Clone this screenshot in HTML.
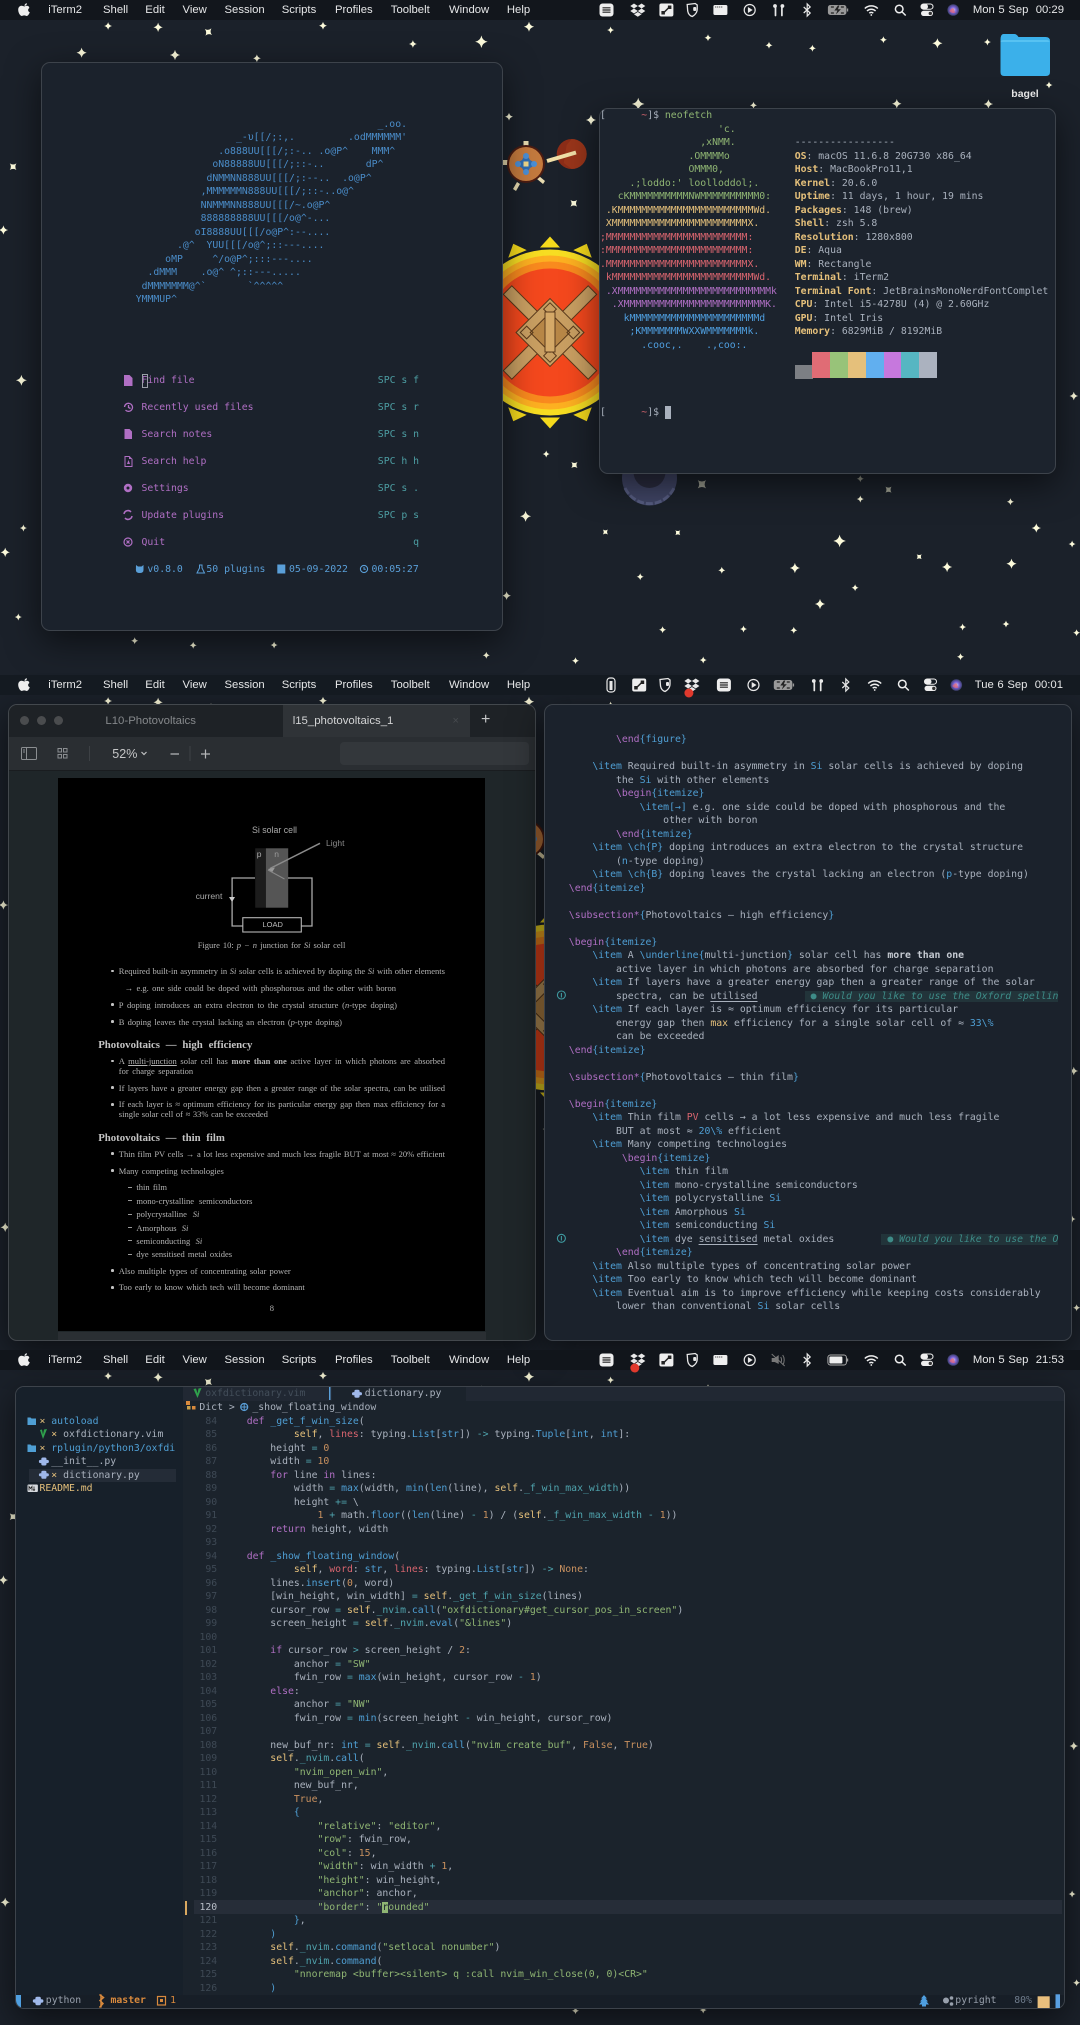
<!DOCTYPE html>
<html><head><meta charset="utf-8"><title>Desktop</title>
<style>
*{box-sizing:border-box}
html,body{margin:0;padding:0;background:#1b212a;width:1080px;height:2025px;overflow:hidden}
#root{position:relative;width:1080px;height:2025px;overflow:hidden;background:#1b212a}
svg.abs{position:absolute;left:0;top:0}
.win{position:absolute;border:1px solid #3d434b;border-radius:9px;background:#1b222c;box-shadow:0 10px 34px rgba(0,0,0,.55)}
.t{position:absolute;margin:0;font:9.8px/13.5px "DejaVu Sans Mono","Liberation Mono",monospace;white-space:pre;color:#a9b1bd}
.bar{position:absolute;left:0;width:1080px;height:20px;background:#12161c}
.m{position:absolute;font:11.3px/20px "Liberation Sans",sans-serif;color:#e6e7e8;white-space:nowrap}
.l{position:absolute;font:8.5px/12px "Liberation Serif",serif;color:#b4b4b4;text-align:justify;text-align-last:justify}
.h{position:absolute;font:bold 10.8px/12px "Liberation Serif",serif;color:#c4c4c4;text-align:justify;text-align-last:justify}
.d{position:absolute;font:8px/12px "Liberation Sans",sans-serif;color:#aaa;white-space:nowrap}
.bl{position:absolute;width:2.6px;height:2.6px;border-radius:50%;background:#c4c4c4;left:111.4px}
.ds{position:absolute;width:4px;height:1px;background:#999;left:128.1px}
.s{position:absolute}
/* syntax */
.a{color:#4f9fd4}.p{color:#b06fc4}.y{color:#e5c07b}.r{color:#d9656f}.g{color:#8fb573}.o{color:#c9915f}.c{color:#4fa3ad}
.n{color:#3e4955}.w{color:#c5cad2}.k{color:#b06fc4}
.v{background:#22343a;color:#3e8c88;font-style:italic}
.u{text-decoration:underline;text-underline-offset:2px}
b{font-weight:bold}
</style></head><body><div id="root">

<svg class="abs" width="1080" height="2025" viewBox="0 0 1080 2025">
<defs>
<path id="s" d="M0-.78Q.13-.13 .78 0Q.13.13 0 .78Q-.13.13-.78 0Q-.13-.13 0-.78Z" fill="#fdfbdc"/>
<polygon id="sp" points="-10,-85 10,-85 0,-96" fill="#f5da1c"/>
<g id="wall">
<g>
<circle cx="550" cy="332.5" r="83" fill="#f7dd22"/>
<use href="#sp" transform="translate(550 332.5)"/><use href="#sp" transform="translate(550 332.5) rotate(22.5)"/><use href="#sp" transform="translate(550 332.5) rotate(45)"/><use href="#sp" transform="translate(550 332.5) rotate(67.5)"/><use href="#sp" transform="translate(550 332.5) rotate(90)"/><use href="#sp" transform="translate(550 332.5) rotate(112.5)"/><use href="#sp" transform="translate(550 332.5) rotate(135)"/><use href="#sp" transform="translate(550 332.5) rotate(157.5)"/><use href="#sp" transform="translate(550 332.5) rotate(180)"/><use href="#sp" transform="translate(550 332.5) rotate(202.5)"/><use href="#sp" transform="translate(550 332.5) rotate(225)"/><use href="#sp" transform="translate(550 332.5) rotate(247.5)"/><use href="#sp" transform="translate(550 332.5) rotate(270)"/><use href="#sp" transform="translate(550 332.5) rotate(292.5)"/><use href="#sp" transform="translate(550 332.5) rotate(315)"/><use href="#sp" transform="translate(550 332.5) rotate(337.5)"/>
<circle cx="550" cy="332.5" r="77" fill="#fdb021"/>
<circle cx="550" cy="332.5" r="71" fill="#f98a1e"/>
<circle cx="550" cy="332.5" r="64" fill="#f4481d"/>
<g transform="translate(550 332.5) rotate(45)" fill="#c99f62" stroke="#5a3a1c" stroke-width="1">
<rect x="-6" y="-60" width="12" height="120"/>
<rect x="-60" y="-6" width="120" height="12"/>
<rect x="-24" y="-24" width="48" height="48"/>
<rect x="-14" y="-14" width="28" height="28" fill="#b88747"/>
<rect x="-21" y="-21" width="9" height="9" fill="none"/>
<rect x="12" y="12" width="9" height="9" fill="none"/>
<rect x="12" y="-21" width="9" height="9" fill="none"/>
<rect x="-21" y="12" width="9" height="9" fill="none"/>
</g>
<rect x="545" y="312" width="10" height="40" fill="#d5a968" stroke="#5a3a1c"/>
</g>
<g>
<rect x="523.5" y="141" width="5" height="6" fill="#e8dcb0"/>
<rect x="503" y="160" width="6" height="5" fill="#e8dcb0"/>
<path d="M513 189l4-7 3 2-4 7z" fill="#e8dcb0"/><path d="M539 176l6 5-2 3-6-5z" fill="#e8dcb0"/>
<circle cx="526" cy="164" r="19" fill="#4a1c12"/><circle cx="526" cy="164" r="17" fill="#c47a3e"/>
<path d="M526 153l4 7 7 4-7 4-4 7-4-7-7-4 7-4z" fill="#2f6db3"/><circle cx="526" cy="156" r="3" fill="#4b8fd6"/><circle cx="526" cy="172" r="3" fill="#4b8fd6"/><circle cx="518" cy="164" r="3" fill="#4b8fd6"/><circle cx="534" cy="164" r="3" fill="#4b8fd6"/>
<rect x="523.5" y="161.5" width="5" height="5" fill="#f1d98a"/>
<circle cx="571.7" cy="154" r="15" fill="#8c2d18"/><path d="M571.7 139a15 15 0 0 1 0 30l-8-6 3-18z" fill="#a23a1d" opacity=".6"/>
<path d="M547 161l29-8.5" stroke="#f0dfa8" stroke-width="4"/>
</g>
<g><circle cx="649.5" cy="478" r="27.5" fill="#3f4464"/><circle cx="649.5" cy="472" r="16" fill="#2a2c3f"/><path d="M625 488a27 27 0 0 0 49 0" fill="none" stroke="#565c80" stroke-width="3" stroke-dasharray="7 2"/></g>
<g>
<use href="#s" transform="translate(108.1 26) scale(5)"/><use href="#s" transform="translate(158.1 27.3) scale(6)"/><use href="#s" transform="translate(208.4 32) rotate(40) scale(6)"/><use href="#s" transform="translate(323 25.7) scale(5)"/><use href="#s" transform="translate(529 26.7) scale(6.5)"/><use href="#s" transform="translate(81.6 52.7) scale(6.5)"/><use href="#s" transform="translate(175 55) scale(6.5)"/><use href="#s" transform="translate(256.9 58.3) scale(5)"/><use href="#s" transform="translate(412.9 44) scale(5)"/><use href="#s" transform="translate(481.4 41.7) scale(8)"/><use href="#s" transform="translate(509 116.7) scale(5)"/><use href="#s" transform="translate(13.1 166.7) rotate(45) scale(6)"/><use href="#s" transform="translate(3.4 230) scale(6)"/>
<use href="#s" transform="translate(610.6 30) scale(4.5)"/><use href="#s" transform="translate(708 37.7) scale(4.5)"/><use href="#s" transform="translate(769 45.3) scale(4.5)"/><use href="#s" transform="translate(812.4 48.3) scale(4.5)"/><use href="#s" transform="translate(883.4 39.7) scale(4.5)"/><use href="#s" transform="translate(937.4 43.3) scale(6.5)"/><use href="#s" transform="translate(987.4 42) scale(4.5)"/><use href="#s" transform="translate(1049 85) scale(4.5)"/><use href="#s" transform="translate(638.2 104) scale(8)"/><use href="#s" transform="translate(753.5 105.3) scale(4.5)"/><use href="#s" transform="translate(896.8 103.7) scale(6)"/><use href="#s" transform="translate(988.4 104) scale(6)"/><use href="#s" transform="translate(591 120) scale(6.5)"/><use href="#s" transform="translate(573.8 203.3) rotate(45) scale(6)"/>
<use href="#s" transform="translate(21.4 380.3) scale(7)"/><use href="#s" transform="translate(23.4 528) scale(4.5)"/><use href="#s" transform="translate(5.2 552.3) scale(6)"/><use href="#s" transform="translate(18.3 617) scale(4.5)"/><use href="#s" transform="translate(134.7 640.7) scale(4.5)"/><use href="#s" transform="translate(193.2 645.3) scale(4.5)"/><use href="#s" transform="translate(274.1 645) scale(4.5)"/><use href="#s" transform="translate(486.3 655.3) scale(4.5)"/><use href="#s" transform="translate(525.6 516.3) scale(7)"/><use href="#s" transform="translate(506.6 595.7) scale(5.5)"/>
<use href="#s" transform="translate(1073.8 396) scale(5.5)"/><use href="#s" transform="translate(546.2 454) scale(4.5)"/><use href="#s" transform="translate(574.4 465) rotate(45) scale(5.5)"/><use href="#s" transform="translate(701.9 484.3) rotate(45) scale(7.5)" opacity=".55"/><use href="#s" transform="translate(860.3 478.7) scale(4.5)" opacity=".5"/><use href="#s" transform="translate(888.5 489.7) rotate(45) scale(5.5)" opacity=".6"/><use href="#s" transform="translate(860.3 499) scale(4.5)"/><use href="#s" transform="translate(1010.4 501.7) scale(4.5)"/><use href="#s" transform="translate(1036.3 528) scale(6)"/><use href="#s" transform="translate(1072.1 544) scale(4.5)"/><use href="#s" transform="translate(839.6 541) scale(8)"/><use href="#s" transform="translate(605.4 532) rotate(45) scale(4.5)"/><use href="#s" transform="translate(677.8 532.7) rotate(45) scale(4.5)"/><use href="#s" transform="translate(919.2 556.7) rotate(45) scale(4.5)"/><use href="#s" transform="translate(947.1 567) scale(6.5)"/><use href="#s" transform="translate(1011.5 563.7) scale(6.5)"/><use href="#s" transform="translate(794.9 568) scale(6.5)"/><use href="#s" transform="translate(721.8 570.3) scale(4.5)"/><use href="#s" transform="translate(640.2 576.7) scale(4.5)"/><use href="#s" transform="translate(855.1 587.7) scale(4.5)"/><use href="#s" transform="translate(820 604) scale(6.5)"/><use href="#s" transform="translate(662.6 629.7) scale(4.5)"/><use href="#s" transform="translate(743.5 629) scale(4.5)"/><use href="#s" transform="translate(793.8 630.3) scale(4.5)"/><use href="#s" transform="translate(962.6 627) scale(4.5)"/><use href="#s" transform="translate(1006 624) scale(4.5)"/><use href="#s" transform="translate(1076.6 632.7) scale(4.5)"/><use href="#s" transform="translate(575.5 660.7) scale(4.5)"/><use href="#s" transform="translate(703.2 660) scale(4.5)"/><use href="#s" transform="translate(960.5 656.7) scale(4.5)"/>
</g>
</g>
<!-- menu bar icons -->
<path id="i-apple" fill="#eee" d="M2.9-6.8c.2 1.2-1 2.7-2.4 2.6C.3-5.4 1.6-6.7 2.9-6.8zM5.2-1.9C3.5-.9 3.9 1.6 5.8 2.3 5.2 3.9 4 6 2.7 6 1.8 6 1.3 5.4.2 5.4-.9 5.4-1.5 6-2.3 6-3.8 6-5.8 2.7-5.8-.2-5.8-2.9-4-4.2-2.4-4.2c1 0 1.9.6 2.5.6.6 0 1.6-.7 2.8-.7.9 0 1.8.5 2.3 1.4z"/>
<g id="i-menu"><rect x="-7" y="-6.5" width="14" height="13" rx="3" fill="#eee"/><path d="M-4-2.2h8M-4 0h8M-4 2.2h8" stroke="#222" stroke-width="1.2"/></g>
<g id="i-drop" fill="#e8e8e8"><path d="M-3.8-6.5L0-4-3.8-1.5-7.5-4zM3.8-6.5L7.5-4 3.8-1.5 0-4zM-3.8-1.5L0 1-3.8 3.5-7.5 1zM3.8-1.5L7.5 1 3.8 3.5 0 1zM-3.8 4.3L0 2 3.8 4.3 0 6.8z"/></g>
<g id="i-rect"><rect x="-7" y="-6.5" width="14" height="13" rx="2" fill="#eee"/><path d="M-4 4L4-4" stroke="#222" stroke-width="1.5"/><rect x="-5" y="1" width="3.5" height="3.5" fill="#222"/><rect x="1.5" y="-4.5" width="3.5" height="3.5" fill="#222"/></g>
<g id="i-shield" fill="none" stroke="#e8e8e8" stroke-width="1.3"><path d="M-5-5.5L3-6.5 5-5V-1C5 3 2 5.5 0 6.5-2 6-4 4-4.5 1z"/><rect x="1" y="-3" width="3" height="4" rx="1" fill="#e8e8e8" stroke="none"/></g>
<g id="i-win"><rect x="-7" y="-5" width="14" height="10" rx="1.5" fill="#eee"/><path d="M-5-3h.8M-3-3h.8M-1-3h.8M1-3h.8" stroke="#222" stroke-width="1.2"/></g>
<g id="i-play"><circle r="5.5" fill="none" stroke="#e8e8e8" stroke-width="1.2"/><path d="M-1.8-3L3 0-1.8 3z" fill="#e8e8e8"/></g>
<g id="i-pods" stroke="#e8e8e8" stroke-linecap="round" fill="none"><path d="M-3.2-3v8.5M3.2-3v8.5" stroke-width="1.7"/><circle cx="-3.7" cy="-4" r="1.9" fill="#e8e8e8" stroke="none"/><circle cx="3.7" cy="-4" r="1.9" fill="#e8e8e8" stroke="none"/></g>
<path id="i-bt" d="M-3.5-3L3 3 0 6V-6L3-3-3.5 3" fill="none" stroke="#e8e8e8" stroke-width="1.2"/>
<g id="i-batc"><rect x="-10" y="-5" width="18.5" height="10" rx="2.5" fill="#999"/><rect x="9" y="-1.5" width="1.3" height="3" fill="#999"/><path d="M0-4.5L-3.5.5H-.5L-2 4.5 3-.8H0L1.5-4.5z" fill="#222"/><path d="M-7-3h3M-7 3h3M3 -3h3M3 3h3" stroke="#222" stroke-width="1.2"/></g>
<g id="i-bat"><rect x="-10" y="-5" width="18.5" height="10" rx="2.5" fill="none" stroke="#aaa"/><rect x="-8.5" y="-3.5" width="13" height="7" rx="1" fill="#eee"/><rect x="9" y="-1.5" width="1.3" height="3" fill="#999"/></g>
<g id="i-wifi" fill="none" stroke="#eee" stroke-width="1.5"><path d="M-6.5-1.5a9.500 9.500 0 0 1 13 0M-4.300 1a6.300 6.300 0 0 1 8.600 0M-2 3.200a3 3 0 0 1 4 0"/><circle cy="5" r=".9" fill="#eee" stroke="none"/></g>
<g id="i-sr" fill="none" stroke="#eee" stroke-width="1.5"><circle cx="-1" cy="-1" r="3.8"/><path d="M2 2L5.5 5.5"/></g>
<g id="i-ctl"><rect x="-6" y="-6" width="12" height="5.2" rx="2.6" fill="none" stroke="#eee"/><rect x="-6" y="-6" width="7" height="5.2" rx="2.6" fill="#eee"/><rect x="-6" y=".8" width="12" height="5.2" rx="2.6" fill="#eee"/><circle cx="3.3" cy="3.4" r="1.7" fill="#333"/></g>
<radialGradient id="sg"><stop offset="0" stop-color="#dde"/><stop offset=".5" stop-color="#7a62d8"/><stop offset="1" stop-color="#3a3f6a"/></radialGradient>
<g id="i-siri"><circle r="5.8" fill="url(#sg)"/><path d="M-4 1Q0-4 1 0T4 1Q0 5-4 1z" fill="#e0637a" opacity=".75"/></g>
<g id="i-mute"><path d="M-7-2h3l4-3v9L-4 2h-3z" fill="#777"/><path d="M2-3a6 6 0 0 1 0 6M4-5a9 9 0 0 1 0 10M-7-6L6 6" stroke="#777" fill="none"/></g>
<g id="i-bd"><circle cx="-3" cy="4" r="4.5" fill="#e0392d"/></g>
<path id="i-py" fill="#9fb8ea" d="M-1-5h2.500a2 2 0 0 1 2 2v1h1a2 2 0 0 1 0 4h-1v1a2 2 0 0 1-2 2H-1a2 2 0 0 1-2-2V2h-1a2 2 0 0 1 0-4h1v-1a2 2 0 0 1 2-2z"/>
<path id="i-fold" fill="#4f9fd4" d="M-4-3.5h3l1 1h4.500v6.500h-8.500z"/>
</defs>
<use href="#wall"/>
<use href="#wall" y="675"/>
<use href="#wall" y="1350"/>
<!-- desktop folder -->
<path d="M1000.5 40q0-6 3-6h11q2 0 4 3h27q4.500 0 4.500 4v31q0 4-4 4h-42q-3.500 0-3.500-4z" fill="#3bb0ea"/>
<path d="M1000.5 42q0-2 3-2h43q3 0 3 2" fill="#57c2f2"/>
</svg>
<div class="m" style="left:1002px;top:84px;width:46px;text-align:center;font-weight:bold;font-size:10.5px;color:#eee">bagel</div>

<!-- WINDOW 1: dashboard -->
<div class="win" style="left:41px;top:62px;width:462px;height:569px;background:#1b222c"></div>
<pre class="t" style="left:135.7px;top:117.75px;color:#4a8cc8">                                         _.oo.
                 _-υ[[/;:,.         .odMMMMMM'
              .o888UU[[[/;:-.. .o@P^    MMM^
             oN88888UU[[[/;::-..       dP^
            dNMMNN888UU[[[/;:--..  .o@P^
           ,MMMMMMN888UU[[[/;::-..o@^
           NNMMMNN888UU[[[/~.o@P^
           888888888UU[[[/o@^-...
          oI8888UU[[[/o@P^:--....
       .@^  YUU[[[/o@^;::---....
     oMP     ^/o@P^;:::---....
  .dMMM    .o@^ ^;::---.....
 dMMMMMMM@^`       `^^^^^
YMMMUP^</pre>
<pre class="t" style="left:141.5px;top:374px;color:#b06fc4">Find file

Recently used files

Search notes

Search help

Settings

Update plugins

Quit</pre>
<pre class="t" style="left:377.8px;top:374px;color:#4d9ea3">SPC s f

SPC s r

SPC s n

SPC h h

SPC s .

SPC p s

      q</pre>
<pre class="t" style="left:141.5px;top:563px;color:#5a9fd8"> v0.8.0    50 plugins    05-09-2022    00:05:27</pre>
<div class="s" style="left:141.7px;top:373.5px;width:6.5px;height:14px;border:1px solid #9a9fa8"></div>
<svg class="abs" width="1080" height="675" viewBox="0 0 1080 675" style="pointer-events:none">
<g fill="#b06fc4">
<path d="M124 375h5.500l3 3v8h-8.500z"/>
<g fill="none" stroke="#b06fc4" stroke-width="1.3"><path d="M124.500 407a4 4 0 1 1 1 3"/><path d="M128.500 405v2.500l2 1"/></g>
<path d="M124.500 429h5l2.500 2.500v7.500h-7.500z"/>
<path d="M124.500 456h5l3 3v8h-8zm1 1v9h6v-7h-2.500v-2z" fill-rule="evenodd"/><path d="M128.500 460l1.500 4h-3z"/>
<circle cx="128" cy="488" r="4.2"/><circle cx="128" cy="488" r="1.5" fill="#1b222c"/>
<g fill="none" stroke="#b06fc4" stroke-width="1.5"><path d="M124 514a4 4 0 0 1 7-2M132 516a4 4 0 0 1-7 2"/></g>
<g fill="none" stroke="#b06fc4" stroke-width="1.2"><circle cx="128" cy="542" r="4"/><path d="M126.500 540.500l3 3M129.500 540.500l-3 3"/></g>
</g>
<g fill="#5a9fd8">
<path d="M136 565l2 1.500h3.500l2-1.500v5q0 3-3.800 3t-3.800-3z"/>
<path d="M197 573l2.500-5v-3h2.500v3l2.500 5z" fill="none" stroke="#5a9fd8"/>
<rect x="277.3" y="564.5" width="8" height="9"/>
<circle cx="364" cy="569" r="3.6" fill="none" stroke="#5a9fd8" stroke-width="1.1"/><path d="M364 567v2.200h1.800" stroke="#5a9fd8" fill="none"/>
</g>
</svg>

<!-- WINDOW 2: neofetch -->
<div class="win" style="left:599px;top:108px;width:457px;height:366px;background:#1c232d"></div>
<pre class="t" style="left:600px;top:109px"><span style="color:#a9b1bd">[</span>      <span class="r">~</span>]$ <span class="g">neofetch</span>
<span class="g">                    'c.
                 ,xNMM.
               .OMMMMo
               OMMM0,
     .;loddo:' loolloddol;.
   cKMMMMMMMMMMNWMMMMMMMMMM0:</span>
<span class="y"> .KMMMMMMMMMMMMMMMMMMMMMMMWd.
 XMMMMMMMMMMMMMMMMMMMMMMMX.</span>
<span class="r">;MMMMMMMMMMMMMMMMMMMMMMMM:
:MMMMMMMMMMMMMMMMMMMMMMMM:
.MMMMMMMMMMMMMMMMMMMMMMMMX.
 kMMMMMMMMMMMMMMMMMMMMMMMMWd.</span>
<span class="p"> .XMMMMMMMMMMMMMMMMMMMMMMMMMMk
  .XMMMMMMMMMMMMMMMMMMMMMMMMK.</span>
<span style="color:#4f9fe0">    kMMMMMMMMMMMMMMMMMMMMMMd
     ;KMMMMMMMWXXWMMMMMMMk.
       .cooc,.    .,coo:.</span>




[      <span class="r">~</span>]$</pre>
<pre class="t" style="left:794.7px;top:136px;color:#a9b1bd">-----------------
<b class="y">OS</b>: macOS 11.6.8 20G730 x86_64
<b class="y">Host</b>: MacBookPro11,1
<b class="y">Kernel</b>: 20.6.0
<b class="y">Uptime</b>: 11 days, 1 hour, 19 mins
<b class="y">Packages</b>: 148 (brew)
<b class="y">Shell</b>: zsh 5.8
<b class="y">Resolution</b>: 1280x800
<b class="y">DE</b>: Aqua
<b class="y">WM</b>: Rectangle
<b class="y">Terminal</b>: iTerm2
<b class="y">Terminal Font</b>: JetBrainsMonoNerdFontComplet
<b class="y">CPU</b>: Intel i5-4278U (4) @ 2.60GHz
<b class="y">GPU</b>: Intel Iris
<b class="y">Memory</b>: 6829MiB / 8192MiB</pre>
<div class="s" style="left:794.8px;top:365px;width:18px;height:13.5px;background:#7c7f84"></div>
<div class="s" style="left:812.4px;top:351.7px;width:17.8px;height:26.8px;background:#e06c75"></div>
<div class="s" style="left:830.2px;top:351.7px;width:17.8px;height:26.8px;background:#98c379"></div>
<div class="s" style="left:848px;top:351.7px;width:17.8px;height:26.8px;background:#e5c07b"></div>
<div class="s" style="left:865.8px;top:351.7px;width:17.8px;height:26.8px;background:#61afef"></div>
<div class="s" style="left:883.6px;top:351.7px;width:17.8px;height:26.8px;background:#c678dd"></div>
<div class="s" style="left:901.4px;top:351.7px;width:17.8px;height:26.8px;background:#56b6c2"></div>
<div class="s" style="left:919.2px;top:351.7px;width:17.8px;height:26.8px;background:#abb2bf"></div>
<div class="s" style="left:664.7px;top:405.7px;width:5.9px;height:13.5px;background:#a9b1bd"></div>

<!-- PREVIEW WINDOW -->
<div class="win" style="left:8px;top:704px;width:528px;height:637px;background:#1f2629;overflow:hidden;border-color:#43484d">
 <div class="s" style="left:0;top:0;width:528px;height:32px;background:#1e2226"></div>
 <div class="s" style="left:273.5px;top:0;width:187px;height:32px;background:#2f3337"></div>
 <div class="s" style="left:0;top:32px;width:528px;height:34px;background:#2a2e32;border-bottom:1px solid #1a1d20"></div>
 <div class="s" style="left:48.9px;top:627px;width:428px;height:9px;background:#2a2f33"></div>
</div>
<div class="s" style="left:19.6px;top:716.2px;width:9px;height:9px;border-radius:50%;background:#4a4c4e"></div>
<div class="s" style="left:36.8px;top:716.2px;width:9px;height:9px;border-radius:50%;background:#4a4c4e"></div>
<div class="s" style="left:53.7px;top:716.2px;width:9px;height:9px;border-radius:50%;background:#4a4c4e"></div>
<div class="m" style="left:105.4px;top:711px;font-size:11.4px;color:#85888b">L10-Photovoltaics</div>
<div class="m" style="left:292.7px;top:711px;font-size:11.4px;color:#d2d3d4">l15_photovoltaics_1</div>
<div class="m" style="left:452.5px;top:711px;font-size:11px;color:#474b4f">×</div>
<div class="m" style="left:481px;top:710px;font-size:16px;color:#c5c6c7">+</div>
<svg class="abs" width="1080" height="800" viewBox="0 0 1080 800" style="pointer-events:none">
<g fill="none" stroke="#8b8e91">
<rect x="21.5" y="747.5" width="15" height="12" rx="1"/><path d="M26.500 747.500v12M23 750h2M23 752h2"/>
<rect x="58" y="748.5" width="3.5" height="3.5"/><rect x="63.5" y="748.5" width="3.5" height="3.5"/><rect x="58" y="754.5" width="3.5" height="3.5"/><rect x="63.5" y="754.5" width="3.5" height="3.5"/>
<path d="M89.500 746v15M190 746v15" stroke="#3d4145"/>
<path d="M141.500 752l2.500 2.500 2.500-2.500" stroke-width="1.2" stroke="#c0c1c2"/>
<path d="M170.500 754h8.500M201 754h9M205.500 749.500v9" stroke="#b5b6b8" stroke-width="1.2"/>
</g>
</svg>
<div class="m" style="left:112.3px;top:743.5px;font-size:12.5px;color:#c5c6c7">52%</div>
<div class="s" style="left:340.2px;top:741.7px;width:188.4px;height:23.3px;border-radius:4px;background:#33373b"></div>
<div class="s" style="left:57.9px;top:778px;width:427px;height:553px;background:#000"></div>

<!-- PDF diagram -->
<svg class="abs" width="1080" height="1000" viewBox="0 0 1080 1000" style="pointer-events:none">
<rect x="255.2" y="848.3" width="10.7" height="59.4" fill="#1c1c1c"/>
<rect x="265.9" y="848.3" width="22.3" height="59.4" fill="#555"/>
<path d="M255 878H232.100V926H242.800M288 878H312V926H301.300" fill="none" stroke="#aaa" stroke-width="1.3"/>
<rect x="242.8" y="917.7" width="58.5" height="14.3" fill="none" stroke="#b5b5b5" stroke-width="1.1"/>
<path d="M320 843.300L270 868.500" stroke="#8b8b8b" stroke-width="1.5"/>
<path d="M268 869l7-1.500-3 5z" fill="#999"/>
<path d="M268 870l16.500 9" stroke="#888"/>
<path d="M232 902l-3-5h6z" fill="#ccc"/>
</svg>
<div class="d" style="left:252px;top:823.7px;font-size:8.8px">Si solar cell</div>
<div class="d" style="left:326px;top:837px;font-size:8.5px;color:#8a8a8a">Light</div>
<div class="d" style="left:256.8px;top:848px;font-size:8.5px">p</div>
<div class="d" style="left:274.3px;top:848px;font-size:8.5px;color:#999">n</div>
<div class="d" style="left:195.6px;top:890px;font-size:8.6px">current</div>
<div class="d" style="left:262.5px;top:919px;font-size:7.5px;color:#bbb">LOAD</div>
<div class="l" style="left:197.7px;top:939px;width:147.7px">Figure 10: <i>p − n</i> junction for <i>Si</i> solar cell</div>

<span class="bl" style="top:969.7px"></span><div class="l" style="left:118.8px;top:965px;width:326.2px">Required built-in asymmetry in <i>Si</i> solar cells is achieved by doping the <i>Si</i> with other elements</div>
<div class="l" style="left:124.7px;top:982px;width:271.3px">→ e.g. one side could be doped with phosphorous and the other with boron</div>
<span class="bl" style="top:1003.4px"></span><div class="l" style="left:118.8px;top:998.7px;width:278.2px">P doping introduces an extra electron to the crystal structure (<i>n</i>-type doping)</div>
<span class="bl" style="top:1020.4px"></span><div class="l" style="left:118.8px;top:1015.7px;width:223.2px">B doping leaves the crystal lacking an electron (<i>p</i>-type doping)</div>
<div class="h" style="left:98.2px;top:1038.7px;width:154.2px">Photovoltaics — high efficiency</div>
<span class="bl" style="top:1059.7px"></span><div class="l" style="left:118.8px;top:1055px;width:326.2px">A <u>multi-junction</u> solar cell has <b>more than one</b> active layer in which photons are absorbed</div>
<div class="l" style="left:118.8px;top:1065px;width:74.4px">for charge separation</div>
<span class="bl" style="top:1086.4px"></span><div class="l" style="left:118.8px;top:1081.7px;width:326.2px">If layers have a greater energy gap then a greater range of the solar spectra, can be utilised</div>
<span class="bl" style="top:1103px"></span><div class="l" style="left:118.8px;top:1098.3px;width:326.2px">If each layer is ≈ optimum efficiency for its particular energy gap then max efficiency for a</div>
<div class="l" style="left:118.8px;top:1108.3px;width:149.1px">single solar cell of ≈ 33% can be exceeded</div>
<div class="h" style="left:98.2px;top:1132px;width:126.7px">Photovoltaics — thin film</div>
<span class="bl" style="top:1152.4px"></span><div class="l" style="left:118.8px;top:1147.7px;width:326.2px">Thin film PV cells → a lot less expensive and much less fragile BUT at most ≈ 20% efficient</div>
<span class="bl" style="top:1169.4px"></span><div class="l" style="left:118.8px;top:1164.7px;width:105px">Many competing technologies</div>
<span class="ds" style="top:1187px"></span><div class="l" style="left:136.4px;top:1181.3px;width:30.6px">thin film</div>
<span class="ds" style="top:1200.4px"></span><div class="l" style="left:136.4px;top:1194.7px;width:116px">mono-crystalline semiconductors</div>
<span class="ds" style="top:1213.7px"></span><div class="l" style="left:136.4px;top:1208px;width:63px">polycrystalline <i>Si</i></div>
<span class="ds" style="top:1227.4px"></span><div class="l" style="left:136.4px;top:1221.7px;width:52px">Amorphous <i>Si</i></div>
<span class="ds" style="top:1240.4px"></span><div class="l" style="left:136.4px;top:1234.7px;width:65.8px">semiconducting <i>Si</i></div>
<span class="ds" style="top:1253.7px"></span><div class="l" style="left:136.4px;top:1248px;width:95.7px">dye sensitised metal oxides</div>
<span class="bl" style="top:1269.4px"></span><div class="l" style="left:118.8px;top:1264.7px;width:171.9px">Also multiple types of concentrating solar power</div>
<span class="bl" style="top:1286px"></span><div class="l" style="left:118.8px;top:1281.3px;width:186px">Too early to know which tech will become dominant</div>
<div class="l" style="left:269.8px;top:1302px;text-align-last:left">8</div>

<!-- LATEX WINDOW -->
<div class="win" style="left:544px;top:704px;width:528px;height:637px;background:#1b222c"></div>
<pre class="t" style="left:568.8px;top:733px">        <span class="p">\end</span><span class="a">{figure}</span>

    <span class="a">\item</span> Required built-in asymmetry in <span class="a">Si</span> solar cells is achieved by doping
        the <span class="a">Si</span> with other elements
        <span class="p">\begin</span><span class="a">{itemize}</span>
            <span class="a">\item[→]</span> e.g. one side could be doped with phosphorous and the
                other with boron
        <span class="p">\end</span><span class="a">{itemize}</span>
    <span class="a">\item \ch{P}</span> doping introduces an extra electron to the crystal structure
        (<span class="a">n</span>-type doping)
    <span class="a">\item \ch{B}</span> doping leaves the crystal lacking an electron (<span class="a">p</span>-type doping)
<span class="p">\end</span><span class="a">{itemize}</span>

<span class="p">\subsection*</span><span class="a">{</span>Photovoltaics — high efficiency<span class="a">}</span>

<span class="p">\begin</span><span class="a">{itemize}</span>
    <span class="a">\item</span> A <span class="a">\underline{</span>multi-junction<span class="a">}</span> solar cell has <b class="w">more than one</b>
        active layer in which photons are absorbed for charge separation
    <span class="a">\item</span> If layers have a greater energy gap then a greater range of the solar
        spectra, can be <span class="u">utilised</span>        <span class="v"> ● Would you like to use the Oxford spellin</span>
    <span class="a">\item</span> If each layer is ≈ optimum efficiency for its particular
        energy gap then <span class="y">max</span> efficiency for a single solar cell of ≈ <span class="a">33\%</span>
        can be exceeded
<span class="p">\end</span><span class="a">{itemize}</span>

<span class="p">\subsection*</span><span class="a">{</span>Photovoltaics — thin film<span class="a">}</span>

<span class="p">\begin</span><span class="a">{itemize}</span>
    <span class="a">\item</span> Thin film <span class="r">PV</span> cells → a lot less expensive and much less fragile
        BUT at most ≈ <span class="a">20\%</span> efficient
    <span class="a">\item</span> Many competing technologies
         <span class="p">\begin</span><span class="a">{itemize}</span>
            <span class="a">\item</span> thin film
            <span class="a">\item</span> mono-crystalline semiconductors
            <span class="a">\item</span> polycrystalline <span class="a">Si</span>
            <span class="a">\item</span> Amorphous <span class="a">Si</span>
            <span class="a">\item</span> semiconducting <span class="a">Si</span>
            <span class="a">\item</span> dye <span class="u">sensitised</span> metal oxides        <span class="v"> ● Would you like to use the O</span>
        <span class="p">\end</span><span class="a">{itemize}</span>
    <span class="a">\item</span> Also multiple types of concentrating solar power
    <span class="a">\item</span> Too early to know which tech will become dominant
    <span class="a">\item</span> Eventual aim is to improve efficiency while keeping costs considerably
        lower than conventional <span class="a">Si</span> solar cells</pre>
<svg class="abs" width="1080" height="1300" viewBox="0 0 1080 1300" style="pointer-events:none">
<g fill="none" stroke="#3f9aa0" stroke-width="1.1"><circle cx="561.4" cy="995" r="4"/><path d="M561.400 993v4.500"/><circle cx="561.4" cy="1238.3" r="4"/><path d="M561.400 1236v4.500"/></g>
</svg>

<!-- EDITOR WINDOW -->
<div class="win" style="left:15px;top:1386px;width:1050px;height:623px;background:#1b232c;overflow:hidden">
 <div class="s" style="left:0;top:0;width:167px;height:623px;background:#17202a"></div>
 <div class="s" style="left:167px;top:0;width:883px;height:14px;background:#212833"></div>
 <div class="s" style="left:316px;top:0;width:134px;height:14px;background:#1b232c"></div>
 <div class="s" style="left:0;top:608px;width:1050px;height:15px;background:#171e27"></div>
 <div class="s" style="left:0;top:608px;width:5px;height:14px;background:#4f9fe0"></div>
 <div class="s" style="left:12.5px;top:81.5px;width:147.7px;height:13.5px;background:#242c37"></div>
 <div class="s" style="left:178px;top:513px;width:868px;height:14px;background:#262d38"></div>
 <div class="s" style="left:169px;top:513.5px;width:2px;height:14px;background:#d9a860"></div>
</div>
<pre class="t" style="left:199.5px;top:1414.5px"><span class="n"> 84</span>     <span class="k">def</span> <span class="a">_get_f_win_size</span>(
<span class="n"> 85</span>             <span class="y">self</span>, <span class="r">lines</span>: typing.<span class="a">List</span>[<span class="a">str</span>]) <span class="c">-&gt;</span> typing.<span class="a">Tuple</span>[<span class="a">int</span>, <span class="a">int</span>]:
<span class="n"> 86</span>         height <span class="c">=</span> <span class="o">0</span>
<span class="n"> 87</span>         width <span class="c">=</span> <span class="o">10</span>
<span class="n"> 88</span>         <span class="k">for</span> line <span class="k">in</span> lines:
<span class="n"> 89</span>             width <span class="c">=</span> <span class="a">max</span>(width, <span class="a">min</span>(<span class="a">len</span>(line), <span class="y">self</span>.<span class="c">_f_win_max_width</span>))
<span class="n"> 90</span>             height <span class="c">+=</span> \
<span class="n"> 91</span>                 <span class="o">1</span> <span class="c">+</span> math.<span class="a">floor</span>((<span class="a">len</span>(line) <span class="c">-</span> <span class="o">1</span>) / (<span class="y">self</span>.<span class="c">_f_win_max_width</span> <span class="c">-</span> <span class="o">1</span>))
<span class="n"> 92</span>         <span class="k">return</span> height, width
<span class="n"> 93</span>
<span class="n"> 94</span>     <span class="k">def</span> <span class="a">_show_floating_window</span>(
<span class="n"> 95</span>             <span class="y">self</span>, <span class="r">word</span>: <span class="a">str</span>, <span class="r">lines</span>: typing.<span class="a">List</span>[<span class="a">str</span>]) <span class="c">-&gt;</span> <span class="o">None</span>:
<span class="n"> 96</span>         lines.<span class="a">insert</span>(<span class="o">0</span>, word)
<span class="n"> 97</span>         [win_height, win_width] <span class="c">=</span> <span class="y">self</span>.<span class="c">_get_f_win_size</span>(lines)
<span class="n"> 98</span>         cursor_row <span class="c">=</span> <span class="y">self</span>.<span class="c">_nvim</span>.<span class="a">call</span>(<span class="g">"oxfdictionary#get_cursor_pos_in_screen"</span>)
<span class="n"> 99</span>         screen_height <span class="c">=</span> <span class="y">self</span>.<span class="c">_nvim</span>.<span class="a">eval</span>(<span class="g">"&amp;lines"</span>)
<span class="n">100</span>
<span class="n">101</span>         <span class="k">if</span> cursor_row <span class="c">&gt;</span> screen_height / <span class="o">2</span>:
<span class="n">102</span>             anchor <span class="c">=</span> <span class="g">"SW"</span>
<span class="n">103</span>             fwin_row <span class="c">=</span> <span class="a">max</span>(win_height, cursor_row <span class="c">-</span> <span class="o">1</span>)
<span class="n">104</span>         <span class="k">else</span>:
<span class="n">105</span>             anchor <span class="c">=</span> <span class="g">"NW"</span>
<span class="n">106</span>             fwin_row <span class="c">=</span> <span class="a">min</span>(screen_height <span class="c">-</span> win_height, cursor_row)
<span class="n">107</span>
<span class="n">108</span>         new_buf_nr: <span class="a">int</span> <span class="c">=</span> <span class="y">self</span>.<span class="c">_nvim</span>.<span class="a">call</span>(<span class="g">"nvim_create_buf"</span>, <span class="o">False</span>, <span class="o">True</span>)
<span class="n">109</span>         <span class="y">self</span>.<span class="c">_nvim</span>.<span class="a">call</span>(
<span class="n">110</span>             <span class="g">"nvim_open_win"</span>,
<span class="n">111</span>             new_buf_nr,
<span class="n">112</span>             <span class="o">True</span>,
<span class="n">113</span>             <span class="a">{</span>
<span class="n">114</span>                 <span class="g">"relative"</span>: <span class="g">"editor"</span>,
<span class="n">115</span>                 <span class="g">"row"</span>: fwin_row,
<span class="n">116</span>                 <span class="g">"col"</span>: <span class="o">15</span>,
<span class="n">117</span>                 <span class="g">"width"</span>: win_width <span class="c">+</span> <span class="o">1</span>,
<span class="n">118</span>                 <span class="g">"height"</span>: win_height,
<span class="n">119</span>                 <span class="g">"anchor"</span>: anchor,
<span style="color:#b8bec8">120</span>                 <span class="g">"border"</span>: <span class="g">"<span style="background:#8fb573;color:#1b232c">r</span>ounded"</span>
<span class="n">121</span>             <span class="a">}</span>,
<span class="n">122</span>         <span class="a">)</span>
<span class="n">123</span>         <span class="y">self</span>.<span class="c">_nvim</span>.<span class="a">command</span>(<span class="g">"setlocal nonumber"</span>)
<span class="n">124</span>         <span class="y">self</span>.<span class="c">_nvim</span>.<span class="a">command</span>(
<span class="n">125</span>             <span class="g">"nnoremap &lt;buffer&gt;&lt;silent&gt; q :call nvim_win_close(0, 0)&lt;CR&gt;"</span>
<span class="n">126</span>         <span class="a">)</span></pre>
<!-- sidebar -->
<pre class="t" style="left:27.7px;top:1414.5px">    <span class="a">autoload</span>
      oxfdictionary.vim
    <span class="a">rplugin/python3/oxfdi</span>
    __init__.py
      dictionary.py
  <span class="y">README.md</span></pre>
<pre class="t" style="left:39.5px;top:1414.5px"><span class="y">×</span>
  <span class="y">×</span>
<span class="y">×</span>

  <span class="y">×</span></pre>
<!-- tabs/breadcrumb/status text -->
<pre class="t n" style="left:205.2px;top:1387px;color:#434e5a">oxfdictionary.vim</pre>
<pre class="t" style="left:364.7px;top:1387px">dictionary.py</pre>
<pre class="t" style="left:199.4px;top:1400.5px">Dict &gt;</pre>
<pre class="t" style="left:252.4px;top:1400.5px">_show_floating_window</pre>
<pre class="t" style="left:45.8px;top:1994.25px;color:#98a0ac">python</pre>
<pre class="t" style="left:110.5px;top:1994.25px;color:#d98a3d"><b>master</b></pre>
<pre class="t" style="left:170.1px;top:1994.25px;color:#d98a3d">1</pre>
<pre class="t" style="left:955.3px;top:1994.25px;color:#98a0ac">pyright</pre>
<pre class="t" style="left:1014.2px;top:1994.25px;color:#6f7c8c">80%</pre>
<svg class="abs" width="1080" height="2025" viewBox="0 0 1080 2025" style="pointer-events:none">
<path d="M193.500 1389l4 9 4-10-3 .5-1 5-1.500-5z" fill="#2fa14c"/>
<rect x="329" y="1387" width="1.5" height="13" fill="#5a9fd8"/>
<use href="#i-py" transform="translate(356.8 1393.7) scale(.8)"/>
<g fill="#d98a3d"><rect x="186" y="1401" width="4" height="4"/><rect x="187" y="1406" width="3.5" height="3.5" fill="#c9a04a"/><rect x="192" y="1406" width="3.5" height="3.5"/></g>
<circle cx="244.2" cy="1407" r="3.5" fill="none" stroke="#5a9fd8" stroke-width="1.2"/><path d="M244.200 1403.500v7M240.700 1407h7" stroke="#5a9fd8"/>
<!-- sidebar icons -->
<use href="#i-fold" transform="translate(31.5 1421)"/>
<use href="#i-fold" transform="translate(31.5 1448)"/>
<path d="M40 1430l3 9 4-10-3 .5-1 5-1-5z" fill="#2fa14c"/>
<use href="#i-py" transform="translate(43.7 1461.5) scale(.8)"/>
<use href="#i-py" transform="translate(43.7 1474.8) scale(.8)"/>
<rect x="27.5" y="1484.5" width="10.4" height="7.5" rx="1" fill="#d5d8dd"/><path d="M29 1490.500v-4l1.500 2 1.500-2v4M34 1486.500v4M33 1489.500l1 1 1-1" stroke="#222" stroke-width=".8" fill="none"/>
<!-- status icons -->
<use href="#i-py" transform="translate(37.9 2001) scale(.85)"/>
<path d="M101 1994.500v13M99.500 1994.500l4 3-3.500 3 3 3-3.500 4" stroke="#d98a3d" fill="none" stroke-width="1.5"/>
<rect x="157.5" y="1996.5" width="8" height="8.5" fill="none" stroke="#d98a3d" stroke-width="1.2"/><rect x="160" y="1999" width="3" height="3" fill="#d98a3d"/>
<path d="M924 1995l3 3.500h-1.500l2.500 3h-1.500l2.500 3h-3v2h-4v-2h-3l2.500-3H920l2.500-3H921z" fill="#4f9fe0"/>
<circle cx="946" cy="2000.5" r="3" fill="#98a0ac"/><circle cx="951.5" cy="1998" r="1.8" fill="#98a0ac"/><circle cx="951.5" cy="2004" r="1.8" fill="#98a0ac"/>
<rect x="1037.6" y="1996.3" width="12.1" height="11.7" fill="#e9bf7d"/>
<rect x="1055.5" y="1994.3" width="4.5" height="13.7" fill="#5aa0e2"/>
</svg>

<!-- MENU BARS -->
<div class="bar" style="top:0"></div>
<div class="bar" style="top:675px;height:20px;background:#141a21"></div>
<div class="bar" style="top:1350px;height:20px;background:#11151b"></div>

<b class="m" style="left:48.2px;top:0">iTerm2</b><span class="m" style="left:103px;top:0">Shell</span><span class="m" style="left:145.3px;top:0">Edit</span><span class="m" style="left:182.5px;top:0">View</span><span class="m" style="left:224.5px;top:0">Session</span><span class="m" style="left:281.7px;top:0">Scripts</span><span class="m" style="left:335px;top:0">Profiles</span><span class="m" style="left:390.8px;top:0">Toolbelt</span><span class="m" style="left:449px;top:0">Window</span><span class="m" style="left:506.9px;top:0">Help</span>
<span class="m" style="right:16px;top:0;word-spacing:.5px">Mon 5 Sep&nbsp; 00:29</span>

<b class="m" style="left:48.2px;top:675px">iTerm2</b><span class="m" style="left:103px;top:675px">Shell</span><span class="m" style="left:145.3px;top:675px">Edit</span><span class="m" style="left:182.5px;top:675px">View</span><span class="m" style="left:224.5px;top:675px">Session</span><span class="m" style="left:281.7px;top:675px">Scripts</span><span class="m" style="left:335px;top:675px">Profiles</span><span class="m" style="left:390.8px;top:675px">Toolbelt</span><span class="m" style="left:449px;top:675px">Window</span><span class="m" style="left:506.9px;top:675px">Help</span>
<span class="m" style="right:17px;top:675px;word-spacing:.5px">Tue 6 Sep&nbsp; 00:01</span>

<b class="m" style="left:48.2px;top:1350px">iTerm2</b><span class="m" style="left:103px;top:1350px">Shell</span><span class="m" style="left:145.3px;top:1350px">Edit</span><span class="m" style="left:182.5px;top:1350px">View</span><span class="m" style="left:224.5px;top:1350px">Session</span><span class="m" style="left:281.7px;top:1350px">Scripts</span><span class="m" style="left:335px;top:1350px">Profiles</span><span class="m" style="left:390.8px;top:1350px">Toolbelt</span><span class="m" style="left:449px;top:1350px">Window</span><span class="m" style="left:506.9px;top:1350px">Help</span>
<span class="m" style="right:16px;top:1350px;word-spacing:.5px">Mon 5 Sep&nbsp; 21:53</span>

<svg class="abs" width="1080" height="2025" viewBox="0 0 1080 2025" style="pointer-events:none">
<g transform="translate(24 10)"><use href="#i-apple"/></g>
<g transform="translate(24 685)"><use href="#i-apple"/></g>
<g transform="translate(24 1360)"><use href="#i-apple"/></g>
<!-- row 1 -->
<use href="#i-menu" transform="translate(606.5 10)"/><use href="#i-drop" transform="translate(637.8 10)"/><use href="#i-rect" transform="translate(666.4 10)"/><use href="#i-shield" transform="translate(692.2 10)"/><use href="#i-win" transform="translate(720.4 10)"/><use href="#i-play" transform="translate(749.7 10)"/><use href="#i-pods" transform="translate(778.7 10)"/><use href="#i-bt" transform="translate(807.2 10)"/><use href="#i-batc" transform="translate(837.9 10)"/><use href="#i-wifi" transform="translate(871.3 10)"/><use href="#i-sr" transform="translate(900.2 10)"/><use href="#i-ctl" transform="translate(927 10)"/><use href="#i-siri" transform="translate(953.2 10)"/>
<!-- row 2 -->
<rect x="607" y="678" width="8" height="14" rx="3" fill="none" stroke="#e8e8e8" stroke-width="1.2"/><rect x="609.5" y="681" width="3" height="9" fill="#e8e8e8"/>
<use href="#i-rect" transform="translate(639.2 685)"/><use href="#i-shield" transform="translate(665 685)"/><use href="#i-drop" transform="translate(691.9 685)"/><use href="#i-bd" transform="translate(691.9 689)"/><use href="#i-menu" transform="translate(723.9 685)"/><use href="#i-play" transform="translate(753.5 685)"/><use href="#i-batc" transform="translate(783.8 685)"/><use href="#i-pods" transform="translate(817.5 685)"/><use href="#i-bt" transform="translate(845.8 685)"/><use href="#i-wifi" transform="translate(874.7 685)"/><use href="#i-sr" transform="translate(903.3 685)"/><use href="#i-ctl" transform="translate(930.5 685)"/><use href="#i-siri" transform="translate(956.3 685)"/>
<!-- row 3 -->
<use href="#i-menu" transform="translate(606.5 1360)"/><use href="#i-drop" transform="translate(637.8 1360)"/><use href="#i-bd" transform="translate(637.8 1364)"/><use href="#i-rect" transform="translate(666.4 1360)"/><use href="#i-shield" transform="translate(692.2 1360)"/><use href="#i-win" transform="translate(720.4 1360)"/><use href="#i-play" transform="translate(749.7 1360)"/><use href="#i-mute" transform="translate(778.7 1360)"/><use href="#i-bt" transform="translate(807.2 1360)"/><use href="#i-bat" transform="translate(837.9 1360)"/><use href="#i-wifi" transform="translate(871.3 1360)"/><use href="#i-sr" transform="translate(900.2 1360)"/><use href="#i-ctl" transform="translate(927 1360)"/><use href="#i-siri" transform="translate(953.2 1360)"/>
</svg>
</div></body></html>
